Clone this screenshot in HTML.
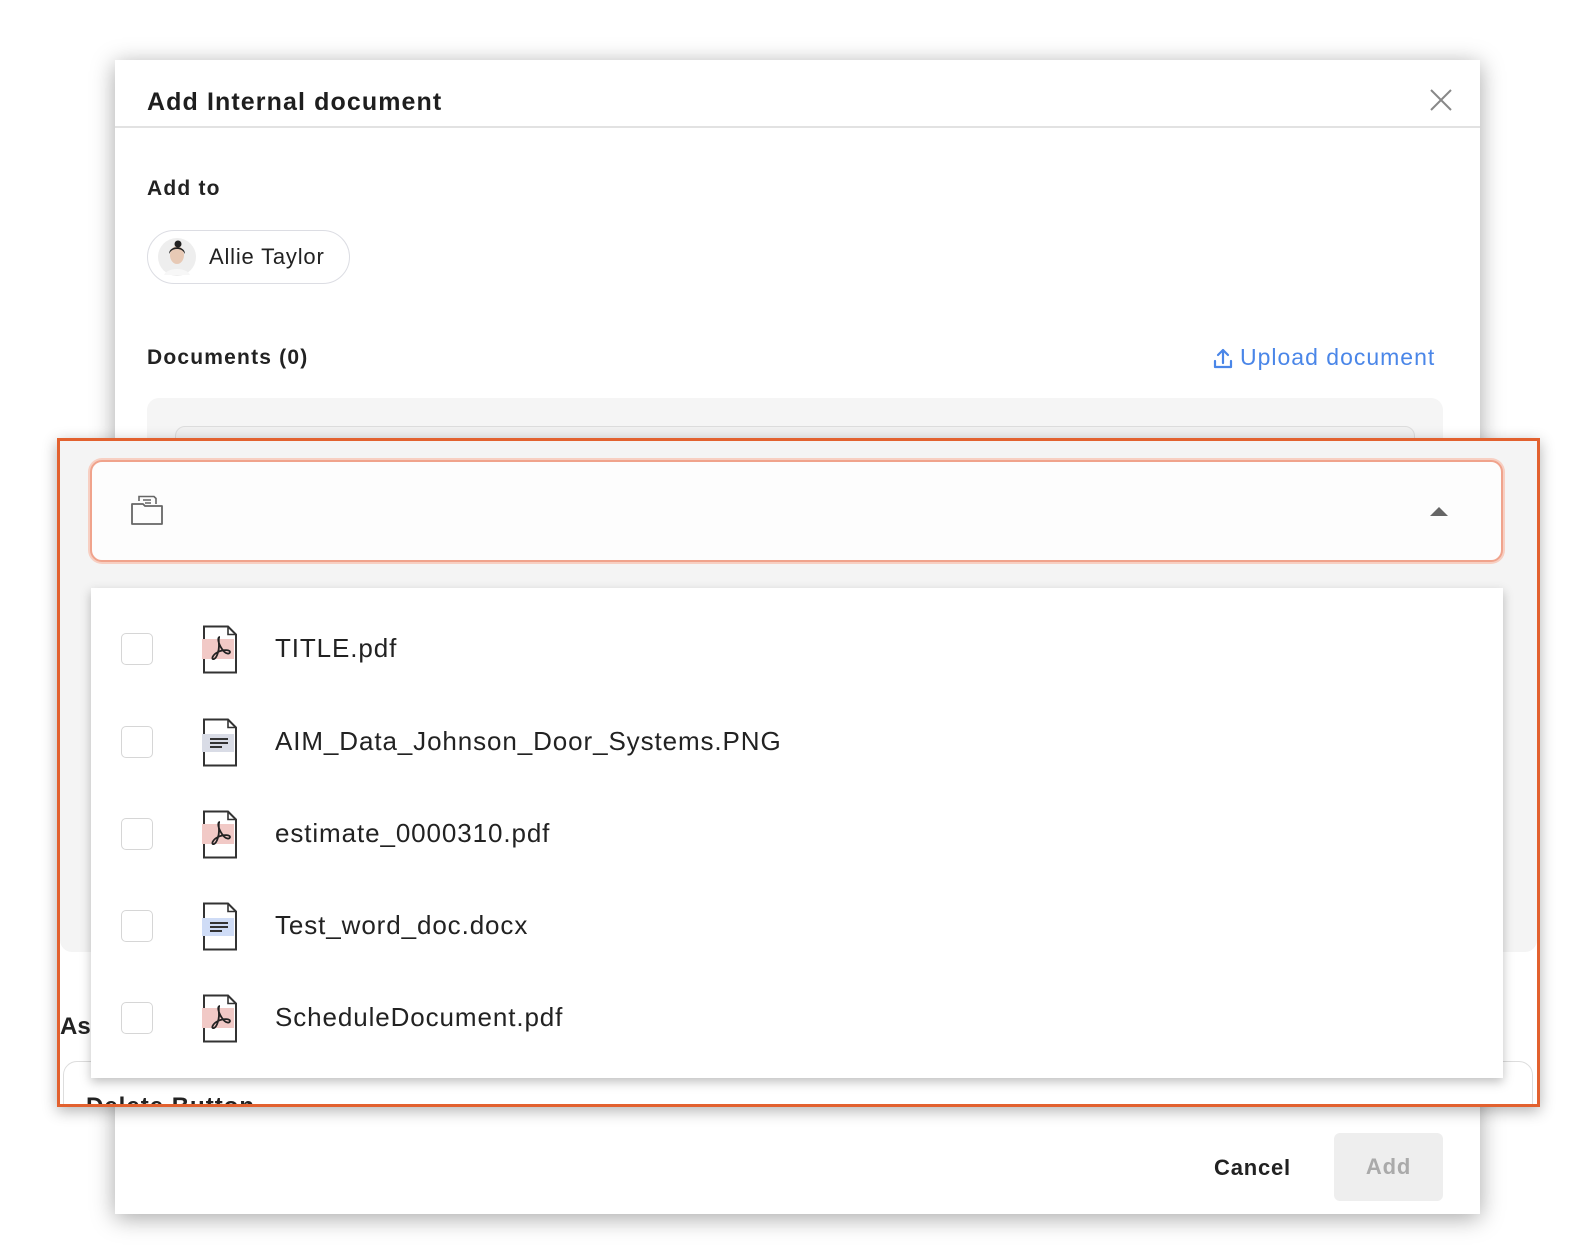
<!DOCTYPE html>
<html style="overflow:hidden"><head><meta charset="utf-8">
<style>
*{box-sizing:border-box;margin:0;padding:0}
html,body{width:1572px;height:1246px;overflow:hidden}
body{background:#fff;position:relative;font-family:"Liberation Sans",sans-serif;color:#222}
.abs{position:absolute;white-space:nowrap}
.modal{left:115px;top:60px;width:1365px;height:1154px;background:#fff;box-shadow:0 4px 22px rgba(0,0,0,.35)}
.title{left:147px;top:88px;font-size:25px;font-weight:bold;color:#1e1e1e;letter-spacing:1.1px}
.hline{left:115px;top:126px;width:1365px;height:2px;background:#e2e2e2}
.lbl{font-size:21px;font-weight:bold;color:#222;letter-spacing:1.2px}
.chip{left:147px;top:230px;width:203px;height:54px;border:1px solid #dcdde3;border-radius:27px}
.overlay{left:57px;top:438px;width:1483px;height:669px;border:3px solid #e2612f;background:#fff;box-shadow:0 4px 14px rgba(0,0,0,.3);overflow:hidden}
.field{left:90px;top:460px;width:1413px;height:102px;border:2px solid #f0a38c;border-radius:12px;background:#fdfdfd;box-shadow:0 0 0 2px #f7cfc2}
.list{left:91px;top:588px;width:1412px;height:490px;background:#fff;box-shadow:0 4px 10px rgba(0,0,0,.25)}
.row{position:absolute;left:0;height:50px;width:100%}
.cb{position:absolute;left:30px;top:11px;width:32px;height:32px;border:1.5px solid #d6d6d6;border-radius:5px;background:#fff}
.ic{position:absolute;left:111px;top:3px}
.nm{position:absolute;left:184px;top:11px;font-size:26px;color:#222;letter-spacing:.9px;white-space:nowrap}
</style></head><body>
<div class="abs modal"></div>
<div class="abs title">Add Internal document</div>
<svg class="abs" style="left:1428px;top:87px" width="26" height="26" viewBox="0 0 26 26"><path d="M3 3L23 23M23 3L3 23" stroke="#888" stroke-width="2"/></svg>
<div class="abs hline"></div>
<div class="abs lbl" style="left:147px;top:177px">Add to</div>
<div class="abs chip">
  <svg style="position:absolute;left:10px;top:7px" width="38" height="38" viewBox="0 0 38 38"><circle cx="19" cy="19" r="19" fill="#eee"/><ellipse cx="19" cy="17" rx="7" ry="9" fill="#e7c9b5"/><path d="M11 16c0-9 16-9 16 0c-2-4-5-5-8-5s-6 1-8 5z" fill="#222"/><circle cx="20" cy="6" r="3.5" fill="#222"/><path d="M6 37c3-8 23-8 26 0z" fill="#f7f7f7"/></svg>
  <div style="position:absolute;left:61px;top:13px;font-size:22px;color:#222;letter-spacing:.8px">Allie Taylor</div>
</div>
<div class="abs lbl" style="left:147px;top:346px">Documents (0)</div>
<svg class="abs" style="left:1212px;top:347px" width="22" height="24" viewBox="0 0 22 24"><path d="M11 16V3M6 8l5-5 5 5M3 14v6h16v-6" stroke="#4a86e8" stroke-width="2.2" fill="none" stroke-linecap="round" stroke-linejoin="round"/></svg>
<div class="abs" style="left:1240px;top:344px;font-size:23px;color:#4a86e8;letter-spacing:1px">Upload document</div>
<div class="abs" style="left:147px;top:398px;width:1296px;height:60px;background:#f5f5f5;border-radius:12px"></div>
<div class="abs" style="left:175px;top:426px;width:1240px;height:30px;border:1px solid #ddd;border-radius:10px;background:#f1f1f1"></div>

<div class="abs" style="left:1214px;top:1155px;font-size:22px;font-weight:bold;color:#222;letter-spacing:.8px">Cancel</div>
<div class="abs" style="left:1334px;top:1133px;width:109px;height:68px;background:#eee;border-radius:6px;color:#aaa;font-size:22px;font-weight:bold;text-align:center;line-height:68px;letter-spacing:.8px">Add</div>

<div class="abs overlay">
  <div class="abs" style="left:0;top:0;width:1477px;height:511px;background:#f4f4f4;border-radius:0 0 12px 12px"></div>
  <div class="abs" style="left:0;top:572px;font-size:24px;font-weight:bold;color:#222">As</div>
  <div class="abs" style="left:3px;top:620px;width:1470px;height:60px;border:1px solid #ddd;border-radius:14px;background:#fff"></div>
  <div class="abs" style="left:26px;top:652px;font-size:24px;font-weight:bold;color:#222;letter-spacing:1px">Delete Button</div>
</div>
<div class="abs field">
  <svg style="position:absolute;left:38px;top:32px" width="34" height="34" viewBox="0 0 34 34"><path d="M9 7V2.5h15l2 2V10" stroke="#666" stroke-width="1.6" fill="none"/><path d="M13 6h8M15 9h6" stroke="#666" stroke-width="1.6"/><path d="M2 10h11l2 2h17v18H2z" stroke="#666" stroke-width="1.8" fill="none" stroke-linejoin="round"/></svg>
  <svg style="position:absolute;left:1336px;top:42px" width="22" height="14" viewBox="0 0 22 14"><path d="M2 12L11 3l9 9z" fill="#666"/></svg>
</div>
<div class="abs list">
<svg width="0" height="0" style="position:absolute"><defs>
<g id="pdf"><path d="M2 1.5h24l8 8v38H2z" fill="#fff" stroke="#333" stroke-width="2"/><path d="M26 1.5v8h8" fill="none" stroke="#333" stroke-width="1.6"/><rect x="0" y="14" width="32" height="20" fill="#f1c9c6"/><path d="M18 12c-3 0-2 6 2 12s8 5 8 3-6-3-12 0-7 8-4 7 5-9 5-13-1-9 1-9z" fill="none" stroke="#222" stroke-width="1.8"/></g>
</defs></svg>
<div class="row" style="top:34px"><div class="cb"></div><svg class="ic" width="38" height="50"><use href="#pdf"/></svg><div class="nm">TITLE.pdf</div></div>
<div class="row" style="top:127px"><div class="cb"></div><svg class="ic" width="38" height="50"><path d="M2 1.5h24l8 8v38H2z" fill="#fff" stroke="#333" stroke-width="2"/><path d="M26 1.5v8h8" fill="none" stroke="#333" stroke-width="1.6"/><rect x="0" y="16" width="32" height="18" fill="#d9dce6"/><path d="M8 21h18M8 25h18M8 29h12" stroke="#333" stroke-width="2"/></svg><div class="nm">AIM_Data_Johnson_Door_Systems.PNG</div></div>
<div class="row" style="top:219px"><div class="cb"></div><svg class="ic" width="38" height="50"><use href="#pdf"/></svg><div class="nm">estimate_0000310.pdf</div></div>
<div class="row" style="top:311px"><div class="cb"></div><svg class="ic" width="38" height="50"><path d="M2 1.5h24l8 8v38H2z" fill="#fff" stroke="#333" stroke-width="2"/><path d="M26 1.5v8h8" fill="none" stroke="#333" stroke-width="1.6"/><rect x="0" y="16" width="32" height="18" fill="#cfdcf6"/><path d="M8 21h18M8 25h18M8 29h12" stroke="#333" stroke-width="2"/></svg><div class="nm">Test_word_doc.docx</div></div>
<div class="row" style="top:403px"><div class="cb"></div><svg class="ic" width="38" height="50"><use href="#pdf"/></svg><div class="nm">ScheduleDocument.pdf</div></div>
</div>
</body></html>
